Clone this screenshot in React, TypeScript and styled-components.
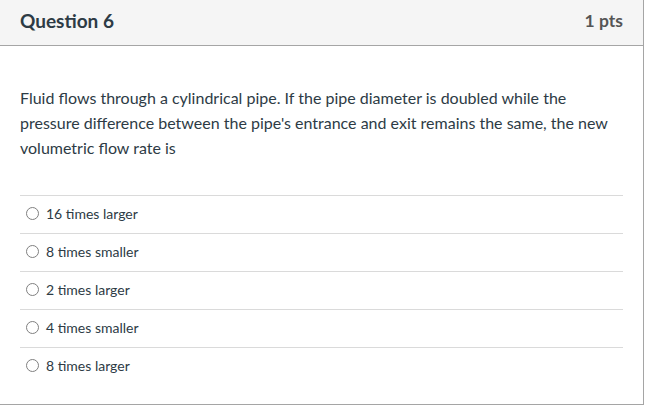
import React from 'react'
import styled, { createGlobalStyle } from 'styled-components'

const GlobalStyle = createGlobalStyle`
    html, body {
        margin: 0;
        padding: 0;
        background: #fff;
    }
    body {
        font-family: Lato, 'Liberation Sans', sans-serif;
        color: #2d3b45;
    }
`

const answers = ['16 times larger', '8 times smaller', '2 times larger', '4 times smaller', '8 times larger']

const App = () => (
    <>
        <GlobalStyle />
        <Question_>
            <Header_>
                <Title_>Question 6</Title_>
                <Points_>1 pts</Points_>
            </Header_>
            <Body_>
                <Text_>
                    Fluid flows through a cylindrical pipe. If the pipe diameter is doubled while the
                    pressure difference between the pipe's entrance and exit remains the same, the new
                    volumetric flow rate is
                </Text_>
                <Answers_>
                    {answers.map(a => (
                        <Answer_ key={a}>
                            <Radio_ />
                            <Label_>{a}</Label_>
                        </Answer_>
                    ))}
                </Answers_>
            </Body_>
        </Question_>
    </>
)

const Question_ = styled.div`
    box-sizing: border-box;
    width: 644px;
    height: 405px;
    border-right: 1px solid #a5a5a5;
    border-bottom: 1px solid #a5a5a5;
    background: #fff;
`

const Header_ = styled.div`
    box-sizing: border-box;
    height: 46px;
    display: flex;
    align-items: center;
    justify-content: space-between;
    padding: 0 20px 5px;
    background: #f5f5f5;
    border-bottom: 1px solid #a5a5a5;
`

const Title_ = styled.h2`
    margin: 0;
    font-size: 19px;
    font-weight: 700;
    color: #2d3b45;
`

const Points_ = styled.div`
    font-size: 17.5px;
    font-weight: 700;
    color: #555;
`

const Body_ = styled.div`
    padding: 39px 20px 0;
`

const Text_ = styled.p`
    margin: 0;
    font-size: 16px;
    line-height: 25px;
`

const Answers_ = styled.div`
    margin-top: 35px;
`

const Answer_ = styled.label`
    box-sizing: border-box;
    display: flex;
    align-items: center;
    gap: 7px;
    height: 38px;
    padding: 0 0 3px 6px;
    border-top: 1px solid #dadada;
`

const Radio_ = styled.span`
    box-sizing: border-box;
    width: 13px;
    height: 13px;
    border-radius: 50%;
    border: 1px solid #808080;
    background: #fff;
`

const Label_ = styled.span`
    font-size: 14px;
    color: #2d3b45;
`

export default App
